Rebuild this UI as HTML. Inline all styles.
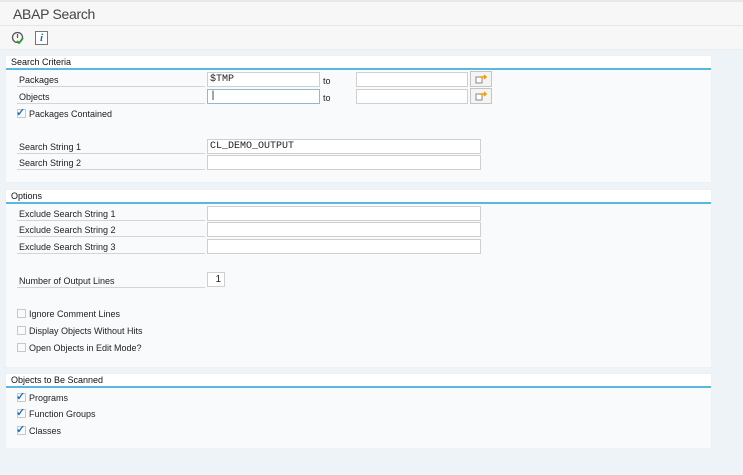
<!DOCTYPE html><html><head><style>
body{margin:0;width:743px;height:475px;overflow:hidden;background:#eef3f8;font-family:"Liberation Sans",sans-serif;font-size:9px;color:#222;position:relative}
.a{position:absolute}
.top{left:0;top:0;width:743px;height:49px;background:#f7f7f7;border-top:2px solid #e8e8e8;box-sizing:border-box}
.panel{position:absolute;left:5px;width:707px;background:#f8fafc;border:1px solid #eef0f2;box-sizing:border-box}
.hd{position:absolute;left:0;top:0;right:0;height:12px;background:#fff;border-bottom:2px solid #5ab8e0;padding-left:5px;line-height:13px;font-size:9px;color:#111}
.lbl{position:absolute;left:17px;width:188px;height:15px;border-bottom:1px solid #d4d4d4;line-height:17px;padding-left:2px;box-sizing:border-box}
.inp{position:absolute;height:15px;background:#fff;border:1px solid #cfcfcf;box-sizing:border-box;line-height:14px;padding-left:2px;font-family:"Liberation Mono",monospace;font-size:10px}
.btn{position:absolute;width:22px;height:16px;background:#f4f4f4;border:1px solid #c4c4c4;box-sizing:border-box}
.cb{position:absolute;left:17px;width:9px;height:9px;border:1px solid #c8c8c8;background:#fafafa;box-sizing:border-box}
.ck{position:absolute;left:16px;color:#1f72c8;font-weight:bold;font-size:11px;line-height:10px}
.ct{position:absolute;left:29px;line-height:12px}
</style></head><body>
<div class="a top"></div>
<div class="a" style="left:0;top:25px;width:743px;height:1px;background:#e6e6e6"></div>
<div class="a" style="left:0;top:49px;width:743px;height:1px;background:#ececec"></div>
<div class="a" style="left:13px;top:6px;font-size:14px;letter-spacing:-0.3px;color:#444">ABAP Search</div>
<svg class="a" style="left:11px;top:31px" width="14" height="14" viewBox="0 0 14 14"><circle cx="6.5" cy="6.5" r="5" fill="none" stroke="#555" stroke-width="1.3"/><path d="M6.5 3v4" stroke="#555" stroke-width="1.2"/><path d="M6 10l2 2 4-5" stroke="#2a9a2a" stroke-width="1.8" fill="none"/></svg>
<div class="a" style="left:35px;top:31px;width:11px;height:12px;border:1px solid #777;background:#fff;color:#1a6fc0;font:italic bold 11px 'Liberation Serif',serif;text-align:center;line-height:12px">i</div>

<div class="panel" style="top:55px;height:128px"><div class="hd">Search Criteria</div></div>
<div class="lbl" style="top:72px">Packages</div>
<div class="inp" style="left:207px;top:72px;width:113px">$TMP</div>
<div class="a" style="left:323px;top:76px">to</div>
<div class="inp" style="left:356px;top:72px;width:112px"></div>
<div class="btn" style="left:470px;top:71px"><svg width="20" height="14"><rect x="5" y="5" width="6" height="6" fill="#fff" stroke="#888"/><path d="M9 5h6M13 3l2 2-2 2" stroke="#f0a000" stroke-width="1.5" fill="none"/></svg></div>
<div class="lbl" style="top:89px">Objects</div>
<div class="inp" style="left:207px;top:89px;width:113px;border-color:#8fb8d8">|</div>
<div class="a" style="left:323px;top:93px">to</div>
<div class="inp" style="left:356px;top:89px;width:112px"></div>
<div class="btn" style="left:470px;top:88px"><svg width="20" height="14"><rect x="5" y="5" width="6" height="6" fill="#fff" stroke="#888"/><path d="M9 5h6M13 3l2 2-2 2" stroke="#f0a000" stroke-width="1.5" fill="none"/></svg></div>
<div class="cb" style="top:109px"></div><div class="ck" style="top:108px">✓</div><div class="ct" style="top:108px">Packages Contained</div>
<div class="lbl" style="top:139px">Search String 1</div>
<div class="inp" style="left:207px;top:139px;width:274px">CL_DEMO_OUTPUT</div>
<div class="lbl" style="top:155px">Search String 2</div>
<div class="inp" style="left:207px;top:155px;width:274px"></div>

<div class="panel" style="top:189px;height:179px"><div class="hd">Options</div></div>
<div class="lbl" style="top:206px">Exclude Search String 1</div>
<div class="inp" style="left:207px;top:206px;width:274px"></div>
<div class="lbl" style="top:222px">Exclude Search String 2</div>
<div class="inp" style="left:207px;top:222px;width:274px"></div>
<div class="lbl" style="top:239px">Exclude Search String 3</div>
<div class="inp" style="left:207px;top:239px;width:274px"></div>
<div class="lbl" style="top:273px">Number of Output Lines</div>
<div class="inp" style="left:207px;top:272px;width:18px;text-align:right;padding-right:3px;font-family:'Liberation Sans',sans-serif">1</div>
<div class="cb" style="top:309px"></div><div class="ct" style="top:308px">Ignore Comment Lines</div>
<div class="cb" style="top:326px"></div><div class="ct" style="top:325px">Display Objects Without Hits</div>
<div class="cb" style="top:343px"></div><div class="ct" style="top:342px">Open Objects in Edit Mode?</div>

<div class="panel" style="top:373px;height:76px"><div class="hd">Objects to Be Scanned</div></div>
<div class="cb" style="top:393px"></div><div class="ck" style="top:392px">✓</div><div class="ct" style="top:392px">Programs</div>
<div class="cb" style="top:409px"></div><div class="ck" style="top:408px">✓</div><div class="ct" style="top:408px">Function Groups</div>
<div class="cb" style="top:426px"></div><div class="ck" style="top:425px">✓</div><div class="ct" style="top:425px">Classes</div>
</body></html>
